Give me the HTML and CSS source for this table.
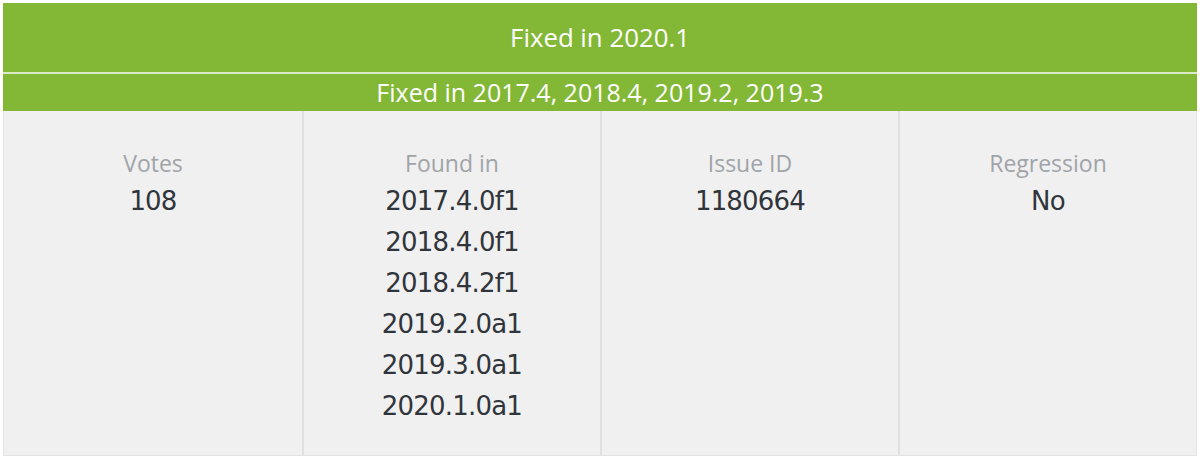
FILE: index.html
```html
<!DOCTYPE html>
<html>
<head>
<meta charset="utf-8">
<link rel="stylesheet" href="styles.css">
</head>
<body>
<div class="issue">
  <div class="bar bar-main">Fixed in 2020.1</div>
  <div class="bar bar-sub">Fixed in 2017.4, 2018.4, 2019.2, 2019.3</div>
  <div class="stats">
    <div class="stat">
      <div class="label">Votes</div>
      <div class="value">108</div>
    </div>
    <div class="stat">
      <div class="label">Found in</div>
      <div class="value">2017.4.0f1</div>
      <div class="value">2018.4.0f1</div>
      <div class="value">2018.4.2f1</div>
      <div class="value">2019.2.0a1</div>
      <div class="value">2019.3.0a1</div>
      <div class="value">2020.1.0a1</div>
    </div>
    <div class="stat">
      <div class="label">Issue ID</div>
      <div class="value">1180664</div>
    </div>
    <div class="stat">
      <div class="label">Regression</div>
      <div class="value">No</div>
    </div>
  </div>
</div>
</body>
</html>
```

FILE: styles.css
```css
html, body {
  margin: 0;
  padding: 0;
  background: #ffffff;
}
body {
  font-family: "Open Sans", "Liberation Sans", sans-serif;
}
.issue {
  margin: 3px 3px 0 3px;
  display: flex;
  flex-direction: column;
}
.bar {
  background: #83b836;
  color: #ffffff;
  text-align: center;
  display: flex;
  align-items: center;
  justify-content: center;
}
.bar-main {
  height: 69px;
  font-size: 25.8px;
  padding-bottom: 1px;
  box-sizing: border-box;
  border-bottom: 2px solid #dcebc6;
  height: 71px;
}
.bar-sub {
  height: 37px;
  font-size: 25px;
  padding-bottom: 2px;
  box-sizing: border-box;
}
.stats {
  display: grid;
  grid-template-columns: repeat(4, 1fr);
  background: #f0f0f0;
  border: 1px solid #e3e3e3;
  border-top: 0;
  height: 344px;
}
.stat {
  text-align: center;
  padding-top: 37px;
  border-left: 2px solid #e0e0e0;
}
.stat:first-child {
  border-left: 0;
}
.label {
  font-size: 23px;
  line-height: 31px;
  color: #a0a4a8;
  margin-bottom: 2px;
}
.value {
  font-family: "DejaVu Sans", sans-serif;
  font-size: 26px;
  line-height: 41px;
  color: #30353b;
  letter-spacing: -0.8px;
}
```
